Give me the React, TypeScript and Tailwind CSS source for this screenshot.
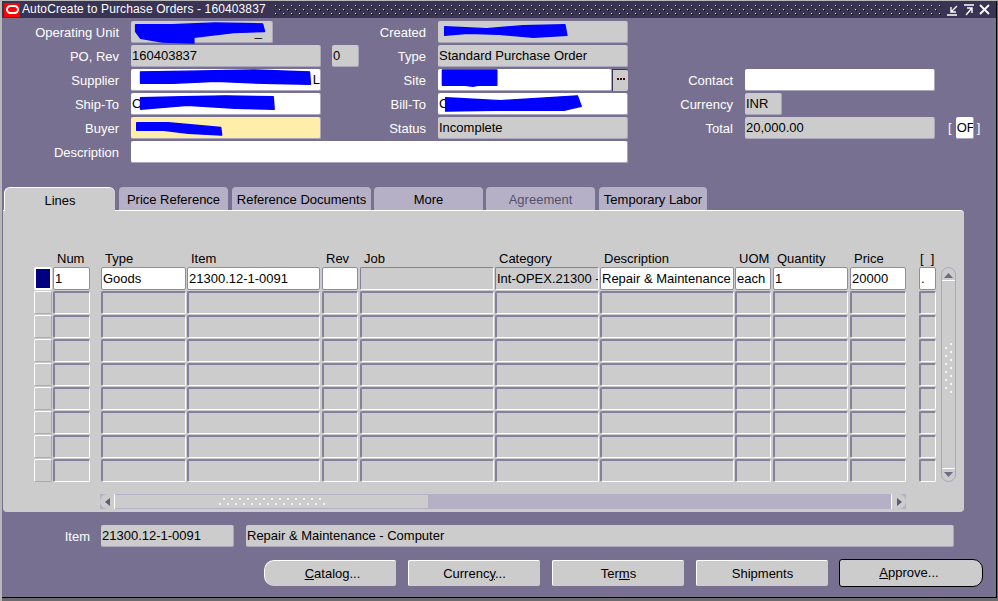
import React from "react";

const font = "font-['Liberation_Sans',Arial,sans-serif]";

// freehand blue marks that hide names in the original
function Blob({ d, box }: { d: string; box: string }) {
  return (
    <svg viewBox={box} className="pointer-events-none absolute inset-0 h-full w-full overflow-visible">
      <path d={d} fill="#0000ff" stroke="#0000ff" strokeWidth="1.5" strokeLinejoin="round" />
    </svg>
  );
}

function Field({
  w,
  kind = "gray",
  children,
  className = "",
}: {
  w: string;
  kind?: "gray" | "white" | "yellow";
  children?: React.ReactNode;
  className?: string;
}) {
  const bg = kind === "white" ? "bg-white" : kind === "yellow" ? "bg-[#ffeeaa]" : "bg-[#cccccc]";
  return (
    <div
      className={`relative h-[22px] shrink-0 whitespace-nowrap rounded-[2px] border-r border-b border-[#aaa6bc] pl-[1px] text-[13px] leading-[21px] text-black ${bg} ${w} ${className}`}
    >
      {children}
    </div>
  );
}

function Label({ w, children }: { w: string; children: React.ReactNode }) {
  return <div className={`mr-3 h-[22px] shrink-0 text-right text-[13px] leading-[23px] text-white ${w}`}>{children}</div>;
}

function HeaderForm() {
  return (
    <div className="flex h-[169px] flex-col gap-[2px] pt-[3px]">
      <div className="flex">
        <Label w="w-[117px]">Operating Unit</Label>
        <Field w="w-[142px]">
          <span className="absolute right-[10px]">_</span>
          <Blob box="0 0 142 22" d="M2 4 L40 4 L85 2 L135 3 L137 11 L105 12 L63 17 L63 23 L30 22 L7 18 L2 11 Z" />
        </Field>
        <Label w="w-[153px]">Created</Label>
        <Field w="w-[190px]">
          <Blob box="0 0 190 22" d="M3 6 L47 8 L85 5 L129 4 L131 15 L96 17 L60 14 L27 13 L3 15 Z" />
        </Field>
      </div>
      <div className="flex">
        <Label w="w-[117px]">PO, Rev</Label>
        <Field w="w-[190px]">160403837</Field>
        <Field w="w-[27px] ml-[11px]">0</Field>
        <Label w="w-[67px]">Type</Label>
        <Field w="w-[190px]">Standard Purchase Order</Field>
      </div>
      <div className="flex">
        <Label w="w-[117px]">Supplier</Label>
        <Field w="w-[190px]" kind="white">
          <span className="absolute right-0">L</span>
          <Blob box="0 0 190 22" d="M6 3 L70 2 L125 1 L183 3 L184 16 L135 15 L85 13 L40 15 L6 15 Z" />
        </Field>
        <Label w="w-[105px]">Site</Label>
        <Field w="w-[174px]" kind="white">
          <Blob box="0 0 174 22" d="M1 1 L58 1 L58 17 L38 17 L33 18 L25 17 L1 17 Z" />
        </Field>
        <div className="flex h-[22px] w-[16px] shrink-0 items-start justify-center rounded-tr-[2px] rounded-br-[2px] border-t border-l border-[#3a3454] bg-[#cccccc] pt-[8px]">
          <svg width="8" height="2" viewBox="0 0 8 2"><path d="M0 0h2v2H0zM3 0h2v2H3zM6 0h2v2H6z" fill="#400000" /></svg>
        </div>
        <Label w="w-[105px]">Contact</Label>
        <Field w="w-[190px]" kind="white" />
      </div>
      <div className="flex">
        <Label w="w-[117px]">Ship-To</Label>
        <Field w="w-[190px]" kind="white">
          <span className="absolute left-[1px]">C</span>
          <Blob box="0 0 190 22" d="M6 5 L50 4 L95 3 L145 4 L146 17 L105 16 L55 13 L6 17 Z" />
        </Field>
        <Label w="w-[105px]">Bill-To</Label>
        <Field w="w-[190px]" kind="white">
          <span className="absolute left-[1px]">C</span>
          <Blob box="0 0 190 22" d="M4 5 L62 8 L142 3 L146 14 L128 18 L55 18 L4 19 Z" />
        </Field>
        <Label w="w-[105px]">Currency</Label>
        <Field w="w-[37px]">INR</Field>
      </div>
      <div className="flex">
        <Label w="w-[117px]">Buyer</Label>
        <Field w="w-[190px]" kind="yellow">
          <Blob box="0 0 190 22" d="M2 6 L35 6 L90 11 L91 19 L56 17 L30 14 L2 14 Z" />
        </Field>
        <Label w="w-[105px]">Status</Label>
        <Field w="w-[190px]">Incomplete</Field>
        <Label w="w-[105px]">Total</Label>
        <Field w="w-[190px]">20,000.00</Field>
        <div className="ml-[13px] h-[22px] text-[13px] leading-[22px] text-white">[</div>
        <Field w="w-[18px] ml-[4px] overflow-hidden" kind="white">OF</Field>
        <div className="ml-[3px] h-[22px] text-[13px] leading-[22px] text-white">]</div>
      </div>
      <div className="flex">
        <Label w="w-[117px]">Description</Label>
        <Field w="w-[497px]" kind="white" />
      </div>
    </div>
  );
}

const tabs = [
  { name: "Price Reference", w: "w-[109px] ml-[4px]", dim: false },
  { name: "Reference Documents", w: "w-[139px] ml-[4px]", dim: false },
  { name: "More", w: "w-[109px] ml-[3px]", dim: false },
  { name: "Agreement", w: "w-[109px] ml-[3px]", dim: true },
  { name: "Temporary Labor", w: "w-[108px] ml-[4px]", dim: false },
];

function Tabs() {
  return (
    <div className="relative z-10 flex h-[23px] pl-[2px]">
      <div className="h-[24px] w-[111px] rounded-t-[6px] border-t border-l border-white bg-[#cccccc] text-center text-[13px] leading-[25px] text-black">
        Lines
      </div>
      {tabs.map((t) => (
        <div
          key={t.name}
          className={`h-[23px] rounded-t-[4px] bg-[#b5b0c5] text-center text-[13px] leading-[26px] ${t.w} ${t.dim ? "text-[#55506a]" : "text-black"}`}
        >
          {t.name}
        </div>
      ))}
    </div>
  );
}

const cols = [
  { w: "w-[18px] ml-[31px]", head: "", kind: "ind" },
  { w: "w-[37px] ml-[1px]", head: "Num", kind: "edit", val: "1" },
  { w: "w-[85px] ml-[11px]", head: "Type", kind: "edit", val: "Goods" },
  { w: "w-[133px] ml-[1px]", head: "Item", kind: "edit", val: "21300.12-1-0091" },
  { w: "w-[36px] ml-[2px]", head: "Rev", kind: "edit", val: "" },
  { w: "w-[134px] ml-[2px]", head: "Job", kind: "ro", val: "" },
  { w: "w-[104px] ml-[1px]", head: "Category", kind: "ro", val: "Int-OPEX.21300 -" },
  { w: "w-[134px] ml-[1px]", head: "Description", kind: "edit", val: "Repair & Maintenance" },
  { w: "w-[36px] ml-[1px]", head: "UOM", kind: "edit", val: "each" },
  { w: "w-[75px] ml-[2px]", head: "Quantity", kind: "edit", val: "1" },
  { w: "w-[56px] ml-[2px]", head: "Price", kind: "edit", val: "20000" },
  { w: "w-[17px] ml-[13px]", head: "[\u00a0\u00a0]", kind: "edit", val: "." },
];

function Cell({ col, row }: { col: (typeof cols)[number]; row: number }) {
  const first = row === 0;
  let look = "border-t-2 border-l-2 border-t-[#85809c] border-l-[#85809c] border-r border-b border-r-white border-b-white bg-[#cccccc]";
  if (col.kind === "ind") {
    look = first
      ? "border-2 border-white bg-[#000080]"
      : "border border-[#aaa6bc] border-t-white border-l-white bg-[#cccccc]";
  } else if (first && col.kind === "edit") {
    look = "border border-[#8f8aa6] bg-white";
  } else if (first) {
    look = "border border-[#85809c] border-r-white border-b-white bg-[#cccccc]";
  }
  return (
    <div className={`h-[23px] shrink-0 overflow-hidden whitespace-nowrap rounded-[2px] pl-[1px] text-[13px] leading-[21px] text-black ${col.w} ${look}`}>
      {first ? ("val" in col ? col.val : "") : ""}
    </div>
  );
}

function VScroll() {
  return (
    <div className="ml-[5px] flex h-[215px] w-[15px] flex-col rounded-full border border-[#aaa6bc] bg-[#cccccc]">
      <div className="flex h-[13px] shrink-0 items-center justify-center border-b border-white pt-[2px]">
        <svg width="9" height="5" viewBox="0 0 9 5"><path d="M4.5 0 9 5H0z" fill="#6f6a88" /></svg>
      </div>
      <div className="flex flex-1 items-center justify-center pb-[14px]">
        <svg width="7" height="50" viewBox="0 0 7 50">
          {[0, 8, 16, 24, 32, 40, 48].map((y) => (
            <g key={y} fill="#f4f4f4">
              <rect x="5" y={y} width="2" height="2" />
              {y < 48 && <rect x="0" y={y + 4} width="2" height="2" />}
            </g>
          ))}
        </svg>
      </div>
      <div className="flex h-[13px] shrink-0 items-center justify-center border-t border-white pb-[2px]">
        <svg width="9" height="5" viewBox="0 0 9 5"><path d="M0 0h9L4.5 5z" fill="#6f6a88" /></svg>
      </div>
    </div>
  );
}

function HScroll() {
  return (
    <div className="mt-[12px] ml-[97px] flex h-[15px] w-[806px] bg-[#b5b0c5]">
      <div className="flex h-full w-[15px] items-center justify-center rounded-l-full border-r border-[#fff] bg-[#cccccc]">
        <svg width="5" height="8" viewBox="0 0 5 8"><path d="M5 0v8L0 4z" fill="#5f5a78" /></svg>
      </div>
      <div className="flex h-full w-[313px] items-center justify-center border-y border-[#b5b0c5] bg-[#cccccc]">
        <svg width="106" height="7" viewBox="0 0 106 7">
          {Array.from({ length: 14 }).map((_, i) => (
            <g key={i} fill="#f4f4f4">
              <rect x={4 + i * 8} y="0" width="2" height="2" />
              <rect x={i * 8} y="5" width="2" height="2" />
            </g>
          ))}
        </svg>
      </div>
      <div className="flex-1" />
      <div className="flex h-full w-[15px] items-center justify-center rounded-r-full border-l border-white bg-[#cccccc]">
        <svg width="5" height="8" viewBox="0 0 5 8"><path d="M0 0v8l5-4z" fill="#5f5a78" /></svg>
      </div>
    </div>
  );
}

function LinesPanel() {
  return (
    <div className="ml-[1px] h-[302px] w-[961px] rounded-tr-[4px] rounded-b-[4px] border-t border-white bg-[#cccccc]">
      <div className="flex h-[56px] items-end">
        {cols.map((c) => (
          <div
            key={c.w + c.head}
            className={`shrink-0 text-[13px] leading-[16px] whitespace-nowrap text-black ${c.w} ${c.val === "." ? "pl-[1px]" : "pl-[4px]"}`}
          >
            {c.head}
          </div>
        ))}
      </div>
      <div className="flex">
        <div className="flex flex-col gap-[1px]">
          {[0, 1, 2, 3, 4, 5, 6, 7, 8].map((r) => (
            <div key={r} className="flex">
              {cols.map((c) => (
                <Cell key={c.w + c.head} col={c} row={r} />
              ))}
            </div>
          ))}
        </div>
        <VScroll />
      </div>
      <HScroll />
    </div>
  );
}

function Btn({
  w,
  shape = "border-t border-l border-white",
  children,
}: {
  w: string;
  shape?: string;
  children: React.ReactNode;
}) {
  return (
    <div className={`flex shrink-0 items-center justify-center bg-[#cccccc] text-[13px] text-black ${w} ${shape}`}>
      <span>{children}</span>
    </div>
  );
}

export default function App() {
  return (
    <div className={`h-[601px] w-[998px] overflow-hidden border-t border-l-2 border-[#b8b8b8] bg-[#6b6b6b] ${font}`}>
      <div className="flex h-[597px] w-[995px] flex-col border-r border-b border-black bg-[#787090]">
        <div className="flex h-[17px] shrink-0 items-center bg-[#3a3454]">
          <div className="ml-[2px] flex h-[14px] w-[16px] shrink-0 items-center justify-center bg-[#ff0000]">
            <div className="h-[9px] w-[13px] rounded-[5px] border-2 border-white" />
          </div>
          <div className="ml-[2px] text-[12px] leading-[17px] tracking-[0.12px] whitespace-nowrap text-white">
            AutoCreate to Purchase Orders - 160403837
          </div>
          <svg className="mr-[6px] ml-[9px] h-[14px] flex-1" preserveAspectRatio="none">
            <defs>
              <pattern id="tdots" width="8" height="8" patternUnits="userSpaceOnUse">
                <rect x="0" y="2" width="1" height="1" fill="#e8e8e8" />
                <rect x="1" y="3" width="1" height="1" fill="#111" />
                <rect x="4" y="6" width="1" height="1" fill="#e8e8e8" />
                <rect x="5" y="7" width="1" height="1" fill="#111" />
              </pattern>
            </defs>
            <rect width="100%" height="100%" fill="url(#tdots)" />
          </svg>
          <svg width="12" height="12" viewBox="0 0 12 12" className="mr-[4px] shrink-0"><path d="M10 2 4 8M4 3v5h5M0 11h10" stroke="#fff" strokeWidth="1.4" fill="none" /></svg>
          <svg width="11" height="12" viewBox="0 0 11 12" className="mr-[5px] shrink-0"><path d="M1 1h10M3 11l6-7M4 4h5v5" stroke="#fff" strokeWidth="1.4" fill="none" /></svg>
          <svg width="11" height="11" viewBox="0 0 11 11" className="mr-[6px] shrink-0"><path d="M1 1l9 9M10 1l-9 9" stroke="#fff" strokeWidth="1.8" fill="none" /></svg>
        </div>
        <HeaderForm />
        <Tabs />
        <LinesPanel />
        <div className="mt-[13px] flex">
          <div className="h-[22px] w-[88px] shrink-0 text-right text-[13px] leading-[23px] text-white">Item</div>
          <Field w="w-[133px] ml-[11px]">21300.12-1-0091</Field>
          <Field w="w-[708px] ml-[12px]">Repair &amp; Maintenance - Computer</Field>
        </div>
        <div className="mt-[12px] flex items-center gap-[12px] pl-[262px]">
          <Btn w="h-[26px] w-[132px] pl-[4px]" shape="rounded-l-[10px] rounded-r-[2px] border-t border-l border-white"><u>C</u>atalog...</Btn>
          <Btn w="h-[26px] w-[132px] rounded-[2px]">Currenc<u>y</u>...</Btn>
          <Btn w="h-[26px] w-[132px] rounded-[2px]">Ter<u>m</u>s</Btn>
          <Btn w="h-[26px] w-[132px] rounded-[2px]">Shipments</Btn>
          <Btn w="ml-[-1px] h-[28px] w-[144px] pr-[4px]" shape="rounded-l-[3px] rounded-r-[10px] border border-black"><u>A</u>pprove...</Btn>
        </div>
      </div>
    </div>
  );
}
